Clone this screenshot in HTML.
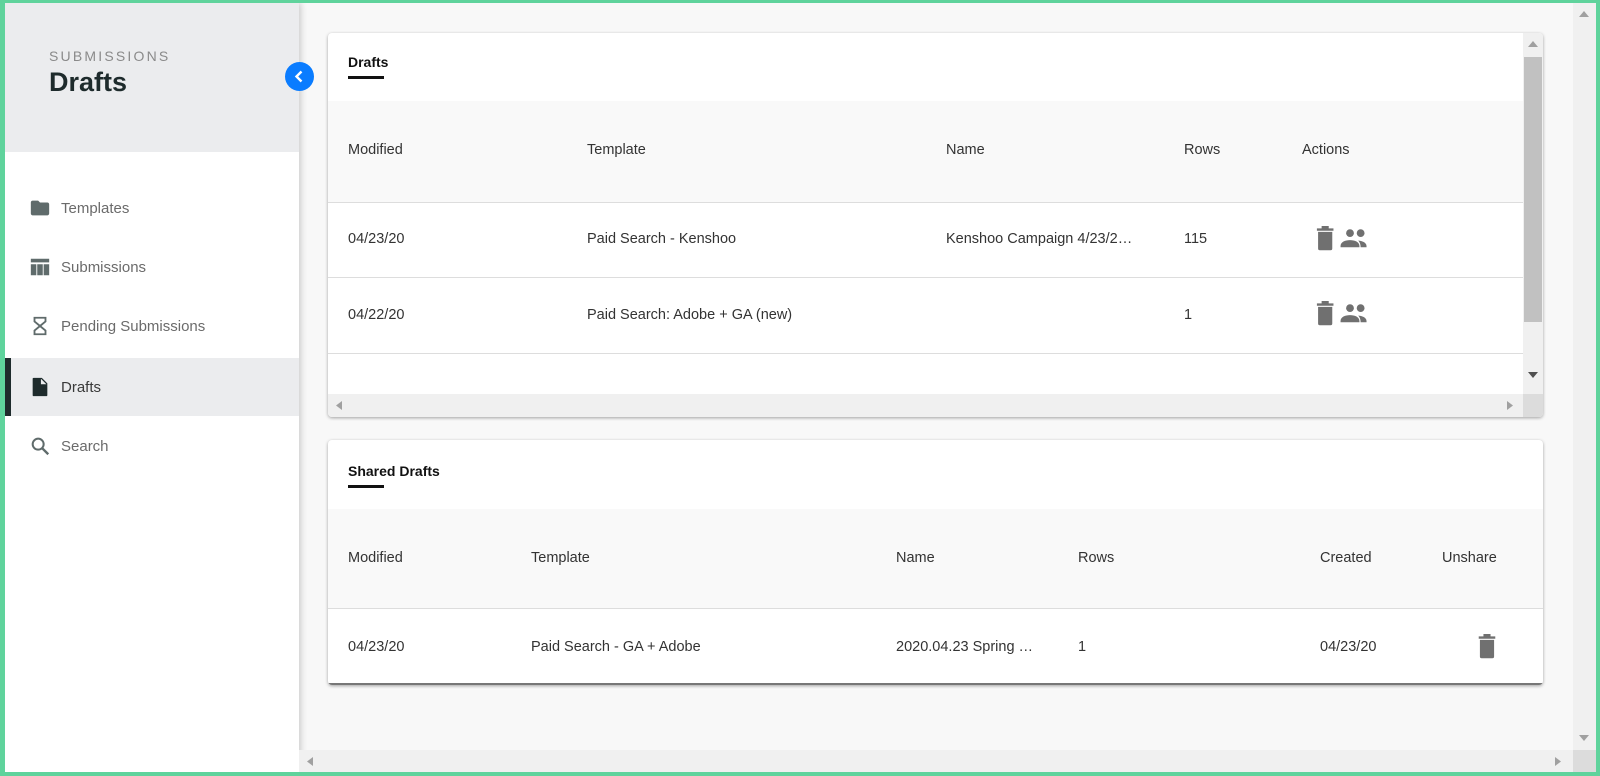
<!DOCTYPE html>
<html><head><meta charset="utf-8"><style>
*{box-sizing:border-box;margin:0;padding:0}
body{width:1600px;height:776px;overflow:hidden;background:#5fd39c;font-family:"Liberation Sans",sans-serif;position:relative}
#frame{position:absolute;left:5px;top:3px;width:1591px;height:769px;background:#f8f8f8;overflow:hidden}
.side{position:absolute;left:0;top:0;width:294px;height:769px;background:#fff;box-shadow:2px 0 6px rgba(0,0,0,.18)}
.sh{height:149px;background:#ebecee;padding:45px 0 0 44px}
.sh .s{font-size:14px;letter-spacing:2.2px;color:#8a8a8a}
.sh .d{font-size:27px;font-weight:bold;color:#1e2b2c;margin-top:3px}
.nav{position:absolute;left:0;width:294px;height:58px;display:flex;align-items:center;padding-left:24px;font-size:15px;color:#6b6b6b}
.nav svg{width:22px;height:22px;margin-right:10px}
.nav.act{background:#ebecee}
.nav.act:before{content:"";position:absolute;left:0;top:0;width:6px;height:58px;background:#1e2b2c}
.btn{position:absolute;left:280px;top:59px;width:29px;height:29px;border-radius:50%;background:#0a7cff;z-index:3}
.card{position:absolute;left:323px;background:#fff;border-radius:4px;box-shadow:0 1px 3px rgba(0,0,0,.35);overflow:hidden}
.ttl{position:absolute;left:20px;font-size:14px;font-weight:bold;color:#111}
.ttl:after{content:"";position:absolute;left:0;top:22px;width:36px;height:3px;background:#111}
.hd{position:absolute;left:0;background:#f9f9f9;border-bottom:1px solid #ddd}
.t{position:absolute;font-size:14.5px;color:#333;white-space:nowrap}
.ln{position:absolute;left:0;height:1px;background:#ddd}
</style></head><body>
<div id="frame">
<div class="side">
<div class="sh"><div class="s">SUBMISSIONS</div><div class="d">Drafts</div></div>
<div class="nav" style="top:176px"><svg viewBox="0 0 24 24"><path fill="#5f6b6b" d="M10 4H4c-1.1 0-2 .9-2 2v12c0 1.1.9 2 2 2h16c1.1 0 2-.9 2-2V8c0-1.1-.9-2-2-2h-8l-2-2z"/></svg>Templates</div>
<div class="nav" style="top:235px"><svg viewBox="0 0 24 24"><path fill="#5f6b6b" d="M2 3h20v4H2zM2 9h6v12H2zM9 9h6v12H9zM16 9h6v12h-6z"/></svg>Submissions</div>
<div class="nav" style="top:294px"><svg viewBox="0 0 24 24"><path fill="none" stroke="#5f6b6b" stroke-width="2" d="M6 3h12v4l-6 5-6-5zM6 21h12v-4l-6-5-6 5z"/></svg>Pending Submissions</div>
<div class="nav act" style="top:355px;color:#3a3a3a"><svg viewBox="0 0 24 24"><path fill="#1e2b2c" d="M5 2h9l6 6v13c0 .6-.4 1-1 1H5c-.6 0-1-.4-1-1V3c0-.6.4-1 1-1zm8 1v6h6z"/></svg>Drafts</div>
<div class="nav" style="top:414px"><svg viewBox="0 0 24 24"><circle cx="10" cy="10" r="6" fill="none" stroke="#5f6b6b" stroke-width="2.2"/><path d="M14.5 14.5L21 21" stroke="#5f6b6b" stroke-width="2.6"/></svg>Search</div>
</div>
<div class="btn"><svg width="29" height="29" viewBox="0 0 29 29"><path d="M16.5 9.5L11.5 14.5l5 5" fill="none" stroke="#fff" stroke-width="2.4"/></svg></div>

<div class="card" style="top:30px;width:1215px;height:384px">
<div class="ttl" style="top:21px">Drafts</div>
<div class="hd" style="top:68px;width:1195px;height:102px"></div>
<div class="t" style="left:20px;top:109px">Modified</div>
<div class="t" style="left:259px;top:109px">Template</div>
<div class="t" style="left:618px;top:109px">Name</div>
<div class="t" style="left:856px;top:109px">Rows</div>
<div class="t" style="left:974px;top:109px">Actions</div>
<div class="t" style="left:20px;top:198px">04/23/20</div>
<div class="t" style="left:259px;top:198px">Paid Search - Kenshoo</div>
<div class="t" style="left:618px;top:198px">Kenshoo Campaign 4/23/2…</div>
<div class="t" style="left:856px;top:198px">115</div>
<div class="ln" style="top:244px;width:1195px"></div>
<div class="t" style="left:20px;top:274px">04/22/20</div>
<div class="t" style="left:259px;top:274px">Paid Search: Adobe + GA (new)</div>
<div class="t" style="left:856px;top:274px">1</div>
<div class="ln" style="top:320px;width:1195px"></div>
<svg style="position:absolute;left:986px;top:193px" width="72" height="26" viewBox="0 0 60 22"><path fill="#707070" d="M2 2h14v2H2zM6 0h6v2H6zM3 5h12v14c0 1-.5 1.5-1.5 1.5h-9C3.5 20.5 3 20 3 19z"/><circle cx="30" cy="6" r="3.3" fill="#707070"/><circle cx="39" cy="6" r="3.3" fill="#707070"/><path fill="#707070" d="M22 17c0-3.5 4-5 8-5s8 1.5 8 5v1H22zM37 12.3c3 .3 7 1.6 7 4.7v1h-5c0-2.5-.8-4.2-2-5.7z"/></svg>
<div style="position:absolute;left:0;top:0"></div>
<svg style="position:absolute;left:986px;top:268px" width="72" height="26" viewBox="0 0 60 22"><path fill="#707070" d="M2 2h14v2H2zM6 0h6v2H6zM3 5h12v14c0 1-.5 1.5-1.5 1.5h-9C3.5 20.5 3 20 3 19z"/><circle cx="30" cy="6" r="3.3" fill="#707070"/><circle cx="39" cy="6" r="3.3" fill="#707070"/><path fill="#707070" d="M22 17c0-3.5 4-5 8-5s8 1.5 8 5v1H22zM37 12.3c3 .3 7 1.6 7 4.7v1h-5c0-2.5-.8-4.2-2-5.7z"/></svg>
<div style="position:absolute;left:0;top:361px;width:1195px;height:23px;background:#f0f0f0"><svg style="position:absolute;left:8px;top:7px" width="6" height="9"><path d="M6 0v9L0 4.5z" fill="#a0a0a0"/></svg><svg style="position:absolute;right:10px;top:7px" width="6" height="9"><path d="M0 0v9l6-4.5z" fill="#a0a0a0"/></svg></div>
<div style="position:absolute;left:1195px;top:0;width:20px;height:384px;background:#f0f0f0">
<svg style="position:absolute;left:5px;top:8px" width="10" height="6"><path d="M0 6h10L5 0z" fill="#a0a0a0"/></svg>
<div style="position:absolute;left:1px;top:24px;width:18px;height:265px;background:#c1c1c1"></div>
<svg style="position:absolute;left:5px;top:339px" width="10" height="6"><path d="M0 0h10L5 6z" fill="#505050"/></svg>
<div style="position:absolute;left:0;top:361px;width:20px;height:23px;background:#dcdcdc"></div></div>
</div>

<div class="card" style="top:437px;width:1215px;height:245px">
<div class="ttl" style="top:23px">Shared Drafts</div>
<div class="hd" style="top:69px;width:1215px;height:100px"></div>
<div class="t" style="left:20px;top:110px">Modified</div>
<div class="t" style="left:203px;top:110px">Template</div>
<div class="t" style="left:568px;top:110px">Name</div>
<div class="t" style="left:750px;top:110px">Rows</div>
<div class="t" style="left:992px;top:110px">Created</div>
<div class="t" style="left:1114px;top:110px">Unshare</div>
<div class="t" style="left:20px;top:199px">04/23/20</div>
<div class="t" style="left:203px;top:199px">Paid Search - GA + Adobe</div>
<div class="t" style="left:568px;top:199px">2020.04.23 Spring …</div>
<div class="t" style="left:750px;top:199px">1</div>
<div class="t" style="left:992px;top:199px">04/23/20</div>
<svg style="position:absolute;left:1148px;top:194px" width="22" height="26" viewBox="0 0 18 22"><path fill="#707070" d="M2 2h14v2H2zM6 0h6v2H6zM3 5h12v14c0 1-.5 1.5-1.5 1.5h-9C3.5 20.5 3 20 3 19z"/></svg>
<div style="position:absolute;left:0;bottom:0;width:1215px;height:2px;background:#777"></div>
</div>

<div style="position:absolute;left:1568px;top:0;width:23px;height:747px;background:#f0f0f0"><svg style="position:absolute;left:6px;top:8px" width="10" height="6"><path d="M0 6h10L5 0z" fill="#a0a0a0"/></svg><svg style="position:absolute;left:6px;top:732px" width="10" height="6"><path d="M0 0h10L5 6z" fill="#a0a0a0"/></svg></div>
<div style="position:absolute;left:294px;top:747px;width:1274px;height:22px;background:#f0f0f0"><svg style="position:absolute;left:8px;top:7px" width="6" height="9"><path d="M6 0v9L0 4.5z" fill="#a0a0a0"/></svg><svg style="position:absolute;right:12px;top:7px" width="6" height="9"><path d="M0 0v9l6-4.5z" fill="#a0a0a0"/></svg></div>
<div style="position:absolute;left:1568px;top:747px;width:23px;height:22px;background:#dcdcdc"></div>
</div>
</body></html>
